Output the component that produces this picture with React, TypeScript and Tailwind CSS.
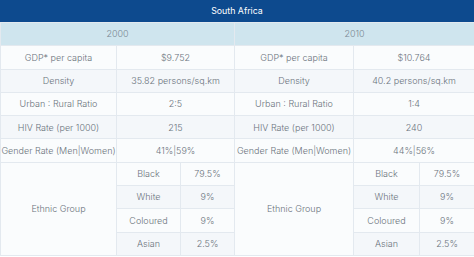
// App.tsx
// Country comparison table: South Africa statistics for 2000 and 2010, side by side.

const rows2000 = [
  ["GDP* per capita", "$9.752"],
  ["Density", "35.82 persons/sq.km"],
  ["Urban : Rural Ratio", "2:5"],
  ["HIV Rate (per 1000)", "215"],
  ["Gender Rate (Men|Women)", "41%|59%"],
];

const rows2010 = [
  ["GDP* per capita", "$10.764"],
  ["Density", "40.2 persons/sq.km"],
  ["Urban : Rural Ratio", "1:4"],
  ["HIV Rate (per 1000)", "240"],
  ["Gender Rate (Men|Women)", "44%|56%"],
];

const ethnic = [
  ["Black", "79.5%"],
  ["White", "9%"],
  ["Coloured", "9%"],
  ["Asian", "2.5%"],
];

const cell = "border border-[#e3e9ef] h-[23.3px] p-0 text-center align-middle whitespace-nowrap";

export default function App() {
  return (
    <div
      className="w-[474px] h-[257px] overflow-hidden bg-white text-[#6a737c] text-[9px] font-light"
      style={{ fontFamily: "Inter, 'Noto Sans', sans-serif" }}
    >
      <div className="h-[22px] bg-[#0d4a8e] text-white flex items-center justify-center text-[8.8px] font-normal">
        South Africa
      </div>
      <table className="w-full border-collapse table-fixed">
        <colgroup>
          <col className="w-[116px]" />
          <col className="w-[64px]" />
          <col className="w-[54px]" />
          <col className="w-[119px]" />
          <col className="w-[66px]" />
          <col className="w-[55px]" />
        </colgroup>
        <tbody>
          <tr className="bg-[#cfe5ee] text-[#7a8893]">
            <td colSpan={3} className={cell}>2000</td>
            <td colSpan={3} className={cell}>2010</td>
          </tr>
          {rows2000.map((r, i) => (
            <tr key={r[0]} className={i % 2 === 0 ? "bg-[#fafcfd]" : "bg-[#f4f7fa]"}>
              <td className={cell}>{r[0]}</td>
              <td colSpan={2} className={cell}>{r[1]}</td>
              <td className={cell}>{rows2010[i][0]}</td>
              <td colSpan={2} className={cell}>{rows2010[i][1]}</td>
            </tr>
          ))}
          {ethnic.map((e, i) => (
            <tr key={e[0]} className={i % 2 === 0 ? "bg-[#fafcfd]" : "bg-[#f4f7fa]"}>
              {i === 0 && (
                <td rowSpan={4} className={cell + " bg-[#fafcfd]"}>Ethnic Group</td>
              )}
              <td className={cell}>{e[0]}</td>
              <td className={cell}>{e[1]}</td>
              {i === 0 && (
                <td rowSpan={4} className={cell + " bg-[#fafcfd]"}>Ethnic Group</td>
              )}
              <td className={cell}>{e[0]}</td>
              <td className={cell}>{e[1]}</td>
            </tr>
          ))}
        </tbody>
      </table>
    </div>
  );
}
